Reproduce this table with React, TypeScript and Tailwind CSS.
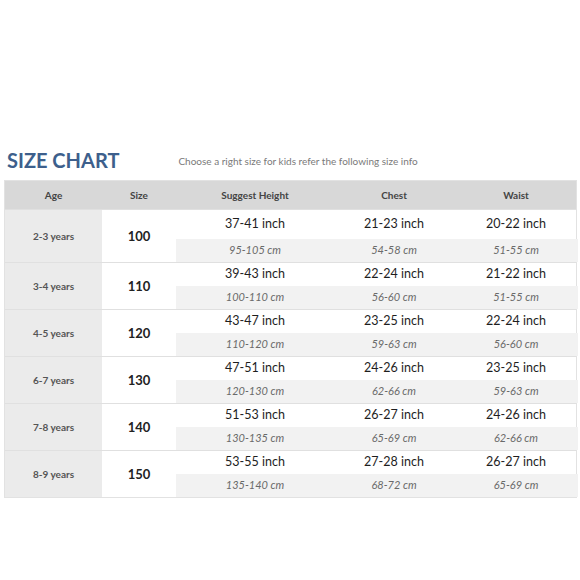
const rows = [
  { age: "2-3 years", size: "100", h: ["37-41 inch", "95-105 cm"], c: ["21-23 inch", "54-58 cm"], w: ["20-22 inch", "51-55 cm"] },
  { age: "3-4 years", size: "110", h: ["39-43 inch", "100-110 cm"], c: ["22-24 inch", "56-60 cm"], w: ["21-22 inch", "51-55 cm"] },
  { age: "4-5 years", size: "120", h: ["43-47 inch", "110-120 cm"], c: ["23-25 inch", "59-63 cm"], w: ["22-24 inch", "56-60 cm"] },
  { age: "6-7 years", size: "130", h: ["47-51 inch", "120-130 cm"], c: ["24-26 inch", "62-66 cm"], w: ["23-25 inch", "59-63 cm"] },
  { age: "7-8 years", size: "140", h: ["51-53 inch", "130-135 cm"], c: ["26-27 inch", "65-69 cm"], w: ["24-26 inch", "62-66 cm"] },
  { age: "8-9 years", size: "150", h: ["53-55 inch", "135-140 cm"], c: ["27-28 inch", "68-72 cm"], w: ["26-27 inch", "65-69 cm"] },
];

const cols = "grid-cols-[97px_74px_158px_120px_124px]";

export default function App() {
  return (
    <div
      className="h-[580px] w-[580px] bg-white pt-[148px]"
      style={{ fontFamily: "Lato, 'Open Sans', sans-serif" }}
    >
      <div className="flex items-end pl-[7px]">
        <span className="text-[20px] font-bold leading-[25px] text-[#3d5f8c]">
          SIZE CHART
        </span>
        <span className="mb-[4px] ml-[59px] text-[10px] text-[#7a7a7a]">
          Choose a right size for kids refer the following size info
        </span>
      </div>

      <div className="ml-[4px] mt-[7px] w-[573px] border border-[#e2e2e2]">
        <div className={`grid ${cols} h-[28px] items-center bg-[#d8d8d8] text-center text-[10px] font-bold text-[#444]`}>
          <span>Age</span>
          <span>Size</span>
          <span>Suggest Height</span>
          <span>Chest</span>
          <span>Waist</span>
        </div>

        {rows.map((r, i) => (
          <div
            key={r.age}
            className={`grid ${cols} border-t border-[#e0e0e0] ${i === 0 ? "h-[53px]" : "h-[47px]"}`}
          >
            <div className="flex items-center justify-center bg-[#ebebeb] text-[10px] font-bold text-[#555]">
              {r.age}
            </div>
            <div className="flex items-center justify-center pt-[1px] text-[13px] font-bold text-[#222]">
              {r.size}
            </div>
            {[r.h, r.c, r.w].map((v, j) => (
              <div key={j} className="flex flex-col">
                <div className="flex flex-1 items-center justify-center text-[12.5px] text-[#1e1e1e]">
                  {v[0]}
                </div>
                <div className="flex h-[23px] items-center justify-center bg-[#f2f2f2] text-[11px] italic text-[#6a6a6a]">
                  {v[1]}
                </div>
              </div>
            ))}
          </div>
        ))}
      </div>
    </div>
  );
}
